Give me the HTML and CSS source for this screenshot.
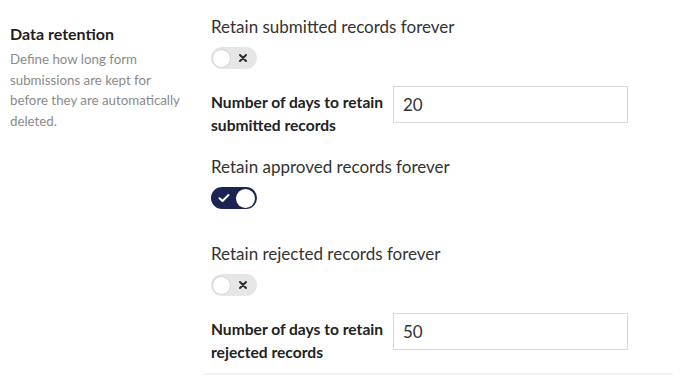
FILE: index.html
```html
<!DOCTYPE html>
<html>
<head>
<meta charset="utf-8">
<link rel="stylesheet" href="styles.css">
</head>
<body>
<div class="page">
  <aside class="side">
    <h2 class="side-title">Data retention</h2>
    <p class="side-desc">Define how long form submissions are kept for before they are automatically deleted.</p>
  </aside>
  <main class="main">
    <section class="group">
      <div class="field-label">Retain submitted records forever</div>
      <span class="toggle toggle-off">
        <span class="knob"></span>
        <svg class="icon icon-x" viewBox="0 0 10 10" width="10" height="10"><path d="M2 2L8 8M8 2L2 8" stroke="#2b2b2b" stroke-width="2" stroke-linecap="round"/></svg>
      </span>
      <div class="num-row">
        <label class="num-label">Number of days to retain submitted records</label>
        <div class="num-input">20</div>
      </div>
    </section>
    <section class="group solo">
      <div class="field-label">Retain approved records forever</div>
      <span class="toggle toggle-on">
        <svg class="icon icon-check" viewBox="0 0 12 10" width="12" height="10"><path d="M1.5 5.2L4.5 8L10.5 2" fill="none" stroke="#ffffff" stroke-width="2" stroke-linecap="round" stroke-linejoin="round"/></svg>
        <span class="knob"></span>
      </span>
    </section>
    <section class="group last">
      <div class="field-label">Retain rejected records forever</div>
      <span class="toggle toggle-off">
        <span class="knob"></span>
        <svg class="icon icon-x" viewBox="0 0 10 10" width="10" height="10"><path d="M2 2L8 8M8 2L2 8" stroke="#2b2b2b" stroke-width="2" stroke-linecap="round"/></svg>
      </span>
      <div class="num-row">
        <label class="num-label">Number of days to retain rejected records</label>
        <div class="num-input">50</div>
      </div>
    </section>
  </main>
</div>
</body>
</html>
```
FILE: styles.css
```css
html, body {
  margin: 0;
  padding: 0;
  background: #ffffff;
}
body {
  font-family: Lato, "Noto Sans", sans-serif;
  color: #333333;
}
.page {
  display: flex;
  align-items: flex-start;
  padding-left: 10px;
}
.side {
  width: 182px;
  padding-right: 12px;
  padding-top: 24px;
}
.side-title {
  margin: 0;
  font-size: 16px;
  line-height: 20px;
  font-weight: 700;
  color: #1f1f1f;
}
.side-desc {
  margin: 5px 0 0;
  font-size: 13.3px;
  line-height: 20.7px;
  color: #8a8a8a;
}
.main {
  width: 462px;
  padding-left: 7px;
  padding-top: 15px;
  border-bottom: 2px solid #f3f3f3;
}
.group {
  display: flex;
  flex-direction: column;
  align-items: flex-start;
  padding-bottom: 18px;
}
.group.solo {
  padding-bottom: 16px;
}
.group.last {
  padding-bottom: 9px;
}
.field-label {
  font-size: 17px;
  line-height: 24px;
  color: #333333;
}
.toggle {
  position: relative;
  display: flex;
  align-items: center;
  box-sizing: border-box;
  width: 46px;
  height: 22px;
  border-radius: 11px;
  margin-top: 8px;
  margin-bottom: 17px;
  padding: 0 2px;
}
.toggle-off {
  background: #e6e6e6;
}
.toggle-on {
  background: #1c2352;
  justify-content: space-between;
  padding-left: 7px;
}
.knob {
  width: 19px;
  height: 19px;
  border-radius: 50%;
  background: #ffffff;
  box-sizing: border-box;
}
.toggle-off .knob {
  border: 1px solid #d4d4d4;
  margin-left: -1px;
}
.toggle-off .icon-x {
  margin-left: 7px;
}
.num-row {
  display: flex;
  align-items: flex-start;
  gap: 1px;
}
.num-label {
  width: 181px;
  padding-top: 5px;
  font-size: 15.6px;
  line-height: 23px;
  font-weight: 700;
  color: #222222;
}
.num-input {
  box-sizing: border-box;
  width: 235px;
  height: 37px;
  border: 1px solid #d9d9d9;
  padding: 0 9px;
  font-size: 17px;
  line-height: 35px;
  color: #333333;
}
```
